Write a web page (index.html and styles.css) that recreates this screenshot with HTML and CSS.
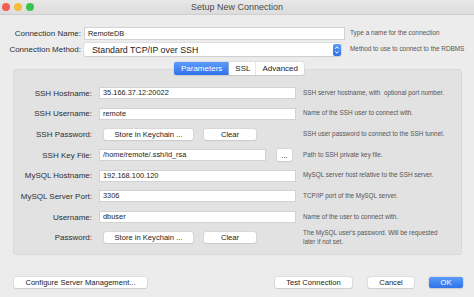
FILE: index.html
```html
<!DOCTYPE html>
<html>
<head>
  <title>Setup New Connection</title>
  <link rel="stylesheet" href="styles.css">
</head>
<body>
  <div class="window">
    <div class="titlebar">
      <div class="lights">
        <span class="light red"></span>
        <span class="light yellow"></span>
        <span class="light green"></span>
      </div>
      <div class="title">Setup New Connection</div>
    </div>

    <div class="top-form">
      <label class="lbl">Connection Name:</label>
      <div class="field"><div class="input">RemoteDB</div></div>
      <div class="hint">Type a name for the connection</div>

      <label class="lbl">Connection Method:</label>
      <div class="field">
        <div class="select">
          <span class="select-text">Standard TCP/IP over SSH</span>
          <span class="stepper">
            <svg width="8" height="12" viewBox="0 0 8 12">
              <path d="M2.2 4.6 L4 2.8 L5.8 4.6" fill="none" stroke="#fff" stroke-width="1"/>
              <path d="M2.2 7.4 L4 9.2 L5.8 7.4" fill="none" stroke="#fff" stroke-width="1"/>
            </svg>
          </span>
        </div>
      </div>
      <div class="hint">Method to use to connect to the RDBMS</div>
    </div>

    <div class="tabs">
      <span class="tab active">Parameters</span>
      <span class="tab">SSL</span>
      <span class="tab">Advanced</span>
    </div>

    <div class="panel">
      <div class="params">
        <label class="lbl">SSH Hostname:</label>
        <div class="field"><div class="input">35.166.37.12:20022</div></div>
        <div class="hint">SSH server hostname, with&nbsp; optional port number.</div>

        <label class="lbl">SSH Username:</label>
        <div class="field"><div class="input">remote</div></div>
        <div class="hint">Name of the SSH user to connect with.</div>

        <label class="lbl">SSH Password:</label>
        <div class="field buttons">
          <button class="btn store">Store in Keychain ...</button>
          <button class="btn clear">Clear</button>
        </div>
        <div class="hint">SSH user password to connect to the SSH tunnel.</div>

        <label class="lbl">SSH Key File:</label>
        <div class="field keyfile">
          <div class="input short">/home/remote/.ssh/id_rsa</div>
          <button class="btn dots">...</button>
        </div>
        <div class="hint">Path to SSH private key file.</div>

        <label class="lbl">MySQL Hostname:</label>
        <div class="field"><div class="input">192.168.100.120</div></div>
        <div class="hint">MySQL server host relative to the SSH server.</div>

        <label class="lbl">MySQL Server Port:</label>
        <div class="field"><div class="input">3306</div></div>
        <div class="hint">TCP/IP port of the MySQL server.</div>

        <label class="lbl">Username:</label>
        <div class="field"><div class="input">dbuser</div></div>
        <div class="hint">Name of the user to connect with.</div>

        <label class="lbl">Password:</label>
        <div class="field buttons">
          <button class="btn store">Store in Keychain ...</button>
          <button class="btn clear">Clear</button>
        </div>
        <div class="hint two">The MySQL user's password. Will be requested later if not set.</div>
      </div>
    </div>

    <div class="footer">
      <button class="btn configure">Configure Server Management...</button>
      <div class="spacer"></div>
      <button class="btn test">Test Connection</button>
      <button class="btn cancel">Cancel</button>
      <button class="btn ok">OK</button>
    </div>
  </div>
</body>
</html>
```

FILE: styles.css
```css
body {
  margin: 0;
  padding: 0;
  font-family: "Liberation Sans", Arial, sans-serif;
  background-color: #ececec;
}
.window {
  width: 474px;
  height: 297px;
  background-color: #ececec;
  display: flex;
  flex-direction: column;
  overflow: hidden;
}
.titlebar {
  height: 15px;
  flex: 0 0 15px;
  background: linear-gradient(#e8e8e8, #dcdcdc);
  border-bottom: 1px solid #cfcfcf;
  box-sizing: border-box;
  display: flex;
  align-items: center;
  position: relative;
}
.lights {
  display: flex;
  gap: 4px;
  padding-left: 2px;
}
.light {
  width: 8px;
  height: 8px;
  border-radius: 50%;
}
.red { background-color: #f25d57; }
.yellow { background-color: #f7bc3a; }
.green { background-color: #3ac44b; }
.title {
  position: absolute;
  left: 0;
  right: 0;
  text-align: center;
  font-size: 9px;
  color: #4a4a4a;
}

.top-form {
  display: grid;
  grid-template-columns: 81px 260px auto;
  grid-auto-rows: 13px;
  column-gap: 4px;
  row-gap: 3px;
  padding-top: 12px;
  align-items: center;
}
.top-form .lbl {
  font-size: 8px;
}
.top-form .field {
  margin-left: -1px;
}
.top-form .hint {
  padding-left: 1px;
}
.lbl {
  text-align: right;
  font-size: 8px;
  color: #2e2e2e;
  white-space: nowrap;
}
.hint {
  font-size: 6.4px;
  color: #555;
  line-height: 8.6px;
  white-space: nowrap;
}
.hint.two {
  white-space: normal;
  width: 148px;
}
.input {
  background-color: #fff;
  border: 1px solid #d2d2d2;
  box-sizing: border-box;
  height: 13px;
  font-size: 7.4px;
  line-height: 11px;
  padding-left: 3px;
  color: #222;
  white-space: nowrap;
  overflow: hidden;
}
.select {
  height: 13px;
  background-color: #fff;
  border-radius: 2px;
  box-shadow: 0 0 0 0.5px #cfcfcf, 0 1px 1px rgba(0, 0, 0, 0.12);
  display: flex;
  align-items: center;
  justify-content: space-between;
  width: 257px;
}
.select-text {
  font-size: 8.8px;
  padding-left: 8px;
  color: #222;
}
.stepper {
  width: 8px;
  height: 12px;
  border-radius: 2px;
  background: linear-gradient(#5a9df8, #2d6fe6);
  display: flex;
}

.tabs {
  display: flex;
  justify-content: center;
  margin-top: 6px;
  margin-bottom: -6px;
  position: relative;
  z-index: 1;
  padding-left: 4px;
}
.tab {
  height: 13px;
  line-height: 13px;
  font-size: 8px;
  background-color: #fff;
  color: #222;
  padding: 0 6px;
  box-shadow: 0 0 0 0.5px #cfcfcf, 0 1px 1px rgba(0, 0, 0, 0.1);
}
.tab:first-child {
  border-radius: 2px 0 0 2px;
}
.tab:last-child {
  border-radius: 0 2px 2px 0;
}
.tab.active {
  background: linear-gradient(#5b9cf8, #2f72ea);
  color: #fff;
  padding: 0 7px;
}

.panel {
  height: 186px;
  margin: 0 12px 0 13px;
  background-color: #e2e2e2;
  border: 1px solid #d9d9d9;
  border-radius: 3px;
  box-sizing: border-box;
}
.params {
  display: grid;
  grid-template-columns: 78px 197px auto;
  grid-auto-rows: 12px;
  column-gap: 7px;
  row-gap: 8.7px;
  padding-top: 17px;
  align-items: center;
}
.params .input {
  height: 12px;
  line-height: 10px;
}
.buttons {
  display: flex;
  gap: 11px;
  padding-left: 5px;
}
.keyfile {
  display: flex;
  gap: 11px;
  align-items: center;
}
.input.short {
  width: 167px;
}

.btn {
  font-family: "Liberation Sans", Arial, sans-serif;
  font-size: 7.6px;
  color: #222;
  background-color: #fff;
  border: none;
  border-radius: 2px;
  box-shadow: 0 0 0 0.5px #cdcdcd, 0 1px 1px rgba(0, 0, 0, 0.12);
  height: 11px;
  padding: 0;
  line-height: 11px;
}
.store { width: 89px; }
.clear { width: 52px; }
.dots { width: 15px; height: 12px; }

.footer {
  display: flex;
  align-items: center;
  margin-top: 22px;
  padding: 0 11px 0 14px;
}
.spacer {
  flex: 1;
}
.configure { width: 133px; }
.test { width: 77px; }
.cancel { width: 46px; margin-left: 16px; }
.ok {
  width: 34px;
  margin-left: 15px;
  background: linear-gradient(#5b9cf8, #2f72ea);
  color: #fff;
}
```
